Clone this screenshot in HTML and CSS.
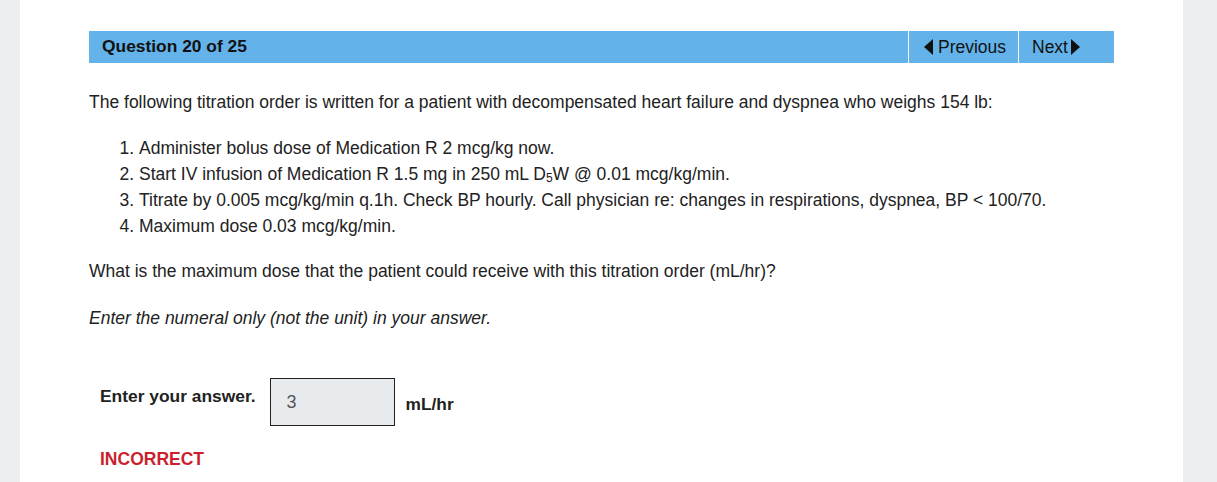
FILE: index.html
```html
<!DOCTYPE html>
<html>
<head>
<meta charset="utf-8">
<link rel="stylesheet" href="styles.css">
</head>
<body>
<div class="page">
  <div class="qbar">
    <div class="qtitle">Question 20 of 25</div>
    <div class="nav">
      <button class="navbtn prev"><span class="tri tri-left"></span>Previous</button>
      <button class="navbtn next">Next<span class="tri tri-right"></span></button>
    </div>
  </div>
  <p class="intro">The following titration order is written for a patient with decompensated heart failure and dyspnea who weighs 154 lb:</p>
  <ol class="orders">
    <li>Administer bolus dose of Medication R 2 mcg/kg now.</li>
    <li>Start IV infusion of Medication R 1.5 mg in 250 mL D<sub>5</sub>W @ 0.01 mcg/kg/min.</li>
    <li>Titrate by 0.005 mcg/kg/min q.1h. Check BP hourly. Call physician re: changes in respirations, dyspnea, BP &lt; 100/70.</li>
    <li>Maximum dose 0.03 mcg/kg/min.</li>
  </ol>
  <p class="question">What is the maximum dose that the patient could receive with this titration order (mL/hr)?</p>
  <p class="hint">Enter the numeral only (not the unit) in your answer.</p>
  <div class="answer">
    <span class="label">Enter your answer.</span>
    <div class="inputbox">3</div>
    <span class="unit">mL/hr</span>
  </div>
  <div class="result">INCORRECT</div>
</div>
</body>
</html>
```
FILE: styles.css
```css
*, *::before, *::after {
  box-sizing: border-box;
}
html, body {
  margin: 0;
  padding: 0;
  height: 100%;
}
body {
  background: #edeef2;
  font-family: "Liberation Sans", Arial, sans-serif;
  font-size: 17.5px;
  color: #222;
  overflow: hidden;
}
.page {
  margin-left: 20px;
  width: 1163px;
  height: 100%;
  background: #fff;
  padding: 31px 69px 0 69px;
}
.qbar {
  display: flex;
  justify-content: space-between;
  align-items: stretch;
  height: 32px;
  background: #63b3ea;
}
.qtitle {
  font-weight: bold;
  font-size: 17.4px;
  color: #111;
  padding-left: 13px;
  line-height: 31px;
}
.nav {
  display: flex;
}
.navbtn {
  border: none;
  border-left: 1px solid #fff;
  background: #63b3ea;
  font-family: "Liberation Sans", Arial, sans-serif;
  font-size: 17.5px;
  color: #111;
  display: flex;
  align-items: center;
  padding: 0;
  height: 32px;
  cursor: pointer;
}
.prev {
  width: 110px;
  padding-left: 15px;
}
.next {
  width: 96px;
  padding-left: 13px;
}
.tri {
  display: inline-block;
  width: 0;
  height: 0;
  border-top: 8px solid transparent;
  border-bottom: 8px solid transparent;
}
.tri-left {
  border-right: 9px solid #111;
  margin-right: 5px;
}
.tri-right {
  border-left: 9px solid #111;
  margin-left: 3px;
}
p {
  margin: 0;
  line-height: 20px;
}
.intro {
  margin-top: 29px;
}
.orders {
  margin: 23px 0 0 0;
  padding-left: 50px;
}
.orders li {
  line-height: 26px;
}
sub {
  font-size: 12px;
  vertical-align: -2px;
  line-height: 0;
}
.question {
  margin-top: 22px;
}
.hint {
  margin-top: 27px;
  font-style: italic;
}
.answer {
  display: flex;
  align-items: flex-start;
  margin-top: 50px;
}
.label {
  font-weight: bold;
  font-size: 17.4px;
  margin-left: 11px;
  margin-top: 8px;
  line-height: 20px;
}
.inputbox {
  margin-left: 14px;
  width: 125px;
  height: 48px;
  border: 1px solid #222;
  background: #e8ebee;
  color: #555;
  font-size: 18px;
  line-height: 46px;
  padding-left: 16px;
}
.unit {
  font-weight: bold;
  font-size: 17.3px;
  margin-left: 11px;
  margin-top: 16px;
  line-height: 20px;
}
.result {
  margin-top: 23px;
  margin-left: 11px;
  font-weight: bold;
  color: #cc1f2e;
  line-height: 20px;
}
```
